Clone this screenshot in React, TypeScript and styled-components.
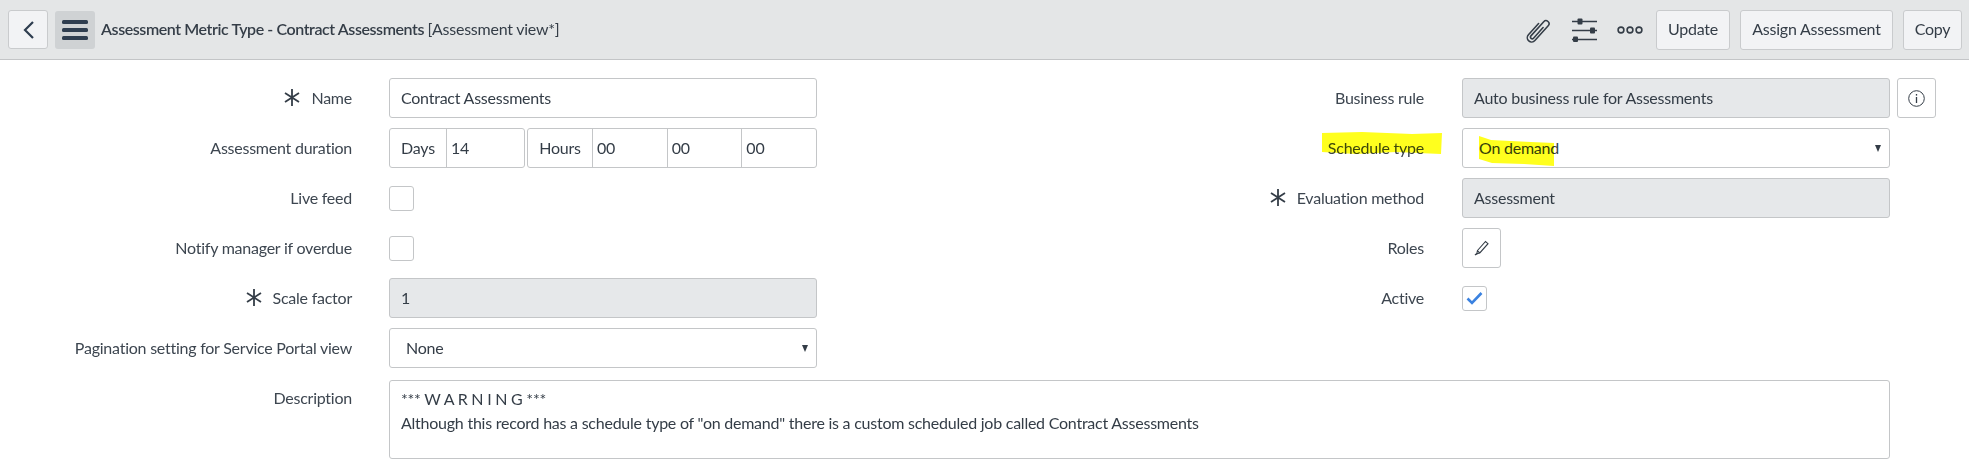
import styled, { createGlobalStyle } from "styled-components";

const GlobalStyle = createGlobalStyle`
  html, body {
    margin: 0;
    padding: 0;
    background: #ffffff;
    overflow: hidden;
  }
  body {
    font-family: "Lato", "Liberation Sans", sans-serif;
    font-size: 16px;
    letter-spacing: -0.24px;
    color: #343d47;
  }
`;

const Page = styled.div`
  width: 1969px;
  height: 466px;
`;

const Header = styled.header`
  display: flex;
  align-items: center;
  height: 59px;
  padding: 0 7px 0 8px;
  background: #e4e6e7;
  border-bottom: 1px solid #c3c5c7;
`;

const BackButton = styled.button`
  display: flex;
  align-items: center;
  justify-content: center;
  width: 40px;
  height: 39px;
  padding: 0;
  background: #f2f3f5;
  border: 1px solid #c9cbcd;
  border-radius: 3px;
`;

const MenuButton = styled.button`
  display: flex;
  align-items: center;
  justify-content: center;
  width: 40px;
  height: 38px;
  margin-left: 7px;
  padding: 0;
  background: #cfd2d4;
  border: none;
  border-radius: 3px;
`;

const Title = styled.h1`
  margin: 0 0 0 6px;
  padding-bottom: 3px;
  font-size: 16px;
  font-weight: 600;
  letter-spacing: -0.42px;
  color: #343d47;
  white-space: nowrap;
`;

const ViewName = styled.span`
  font-weight: 400;
  letter-spacing: -0.24px;
`;

const Actions = styled.div`
  display: flex;
  align-items: center;
  margin-left: auto;
`;

const IconSlot = styled.span<{ $gap: number }>`
  display: flex;
  margin-right: ${(p) => p.$gap}px;
`;

const ActionButton = styled.button<{ $width: number }>`
  box-sizing: border-box;
  width: ${(p) => p.$width}px;
  height: 40px;
  margin-left: 10px;
  padding: 0 0 2px;
  font-family: inherit;
  font-size: 16px;
  letter-spacing: inherit;
  color: #343d47;
  background: #f2f3f5;
  border: 1px solid #c9cbcd;
  border-radius: 3px;
  &:first-of-type {
    margin-left: 0;
  }
`;

const Form = styled.main`
  padding-top: 18px;
`;

const Columns = styled.div`
  display: grid;
  grid-template-columns: 985px 1fr;
`;

const Column = styled.div`
  display: flex;
  flex-direction: column;
  gap: 10px;
`;

const Row = styled.div<{ $labelWidth: number; $gap: number }>`
  display: grid;
  grid-template-columns: ${(p) => p.$labelWidth}px 1fr;
  column-gap: ${(p) => p.$gap}px;
  align-items: center;
  min-height: 40px;
`;

const DescriptionRow = styled(Row)`
  align-items: start;
  margin-top: 12px;
`;

const Label = styled.label<{ $top?: number }>`
  position: relative;
  display: flex;
  align-items: center;
  justify-content: flex-end;
  gap: 11px;
  padding-top: ${(p) => p.$top ?? 0}px;
  padding-bottom: 2px;
  color: #3d4650;
  white-space: nowrap;
`;

const Control = styled.div`
  display: flex;
  align-items: center;
  gap: 7px;
`;

const Field = styled.div<{ $readOnly?: boolean }>`
  display: flex;
  align-items: center;
  box-sizing: border-box;
  width: 428px;
  height: 40px;
  padding: 0 11px 2px;
  background: ${(p) => (p.$readOnly ? "#e6e8ea" : "#ffffff")};
  border: 1px solid #c4c6c8;
  border-radius: 3px;
  white-space: nowrap;
`;

const Select = styled(Field)`
  position: relative;
  padding-left: 16px;
`;

const Caret = styled.span`
  position: absolute;
  right: 8px;
  top: 16px;
  border-left: 3.5px solid transparent;
  border-right: 3.5px solid transparent;
  border-top: 7px solid #343d47;
`;

const Duration = styled.div`
  display: flex;
  gap: 2px;
  width: 428px;
`;

const DurationGroup = styled.div<{ $grow: number }>`
  display: flex;
  flex: ${(p) => p.$grow} 0 0;
  box-sizing: border-box;
  height: 40px;
  border: 1px solid #c4c6c8;
  border-radius: 3px;
`;

const DurationUnit = styled.div<{ $width: number }>`
  display: flex;
  align-items: center;
  justify-content: center;
  box-sizing: border-box;
  width: ${(p) => p.$width}px;
  padding-bottom: 2px;
  border-right: 1px solid #c4c6c8;
`;

const DurationValue = styled.div<{ $last?: boolean }>`
  display: flex;
  align-items: center;
  flex: 1;
  padding: 0 0 2px 4px;
  border-right: ${(p) => (p.$last ? "none" : "1px solid #c4c6c8")};
`;

const Checkbox = styled.div`
  display: flex;
  align-items: center;
  justify-content: center;
  box-sizing: border-box;
  width: 25px;
  height: 25px;
  background: #ffffff;
  border: 1px solid #c4c6c8;
  border-radius: 3px;
`;

const SquareButton = styled.button`
  display: flex;
  align-items: center;
  justify-content: center;
  width: 39px;
  height: 40px;
  padding: 0;
  background: #ffffff;
  border: 1px solid #c4c6c8;
  border-radius: 3px;
`;

const Description = styled.div`
  box-sizing: border-box;
  width: 1501px;
  height: 79px;
  padding: 6px 12px 0 11px;
  line-height: 24px;
  border: 1px solid #c4c6c8;
  border-radius: 3px;
`;

const MarkerStroke = styled.svg<{ $left: number; $top: number }>`
  position: absolute;
  left: ${(p) => p.$left}px;
  top: ${(p) => p.$top}px;
  mix-blend-mode: multiply;
  pointer-events: none;
`;

const RequiredMark = () => (
  <svg width="16" height="17" viewBox="0 0 16 17" stroke="#343d47" strokeWidth="1.8">
    <path d="M8 0v17M1 4l14 9M15 4L1 13" />
  </svg>
);

const MenuIcon = () => (
  <svg width="27" height="20" viewBox="0 0 27 20" fill="#2e3d4f">
    <rect x="0" y="0" width="26" height="4" rx="1.5" />
    <rect x="0" y="8" width="26" height="4" rx="1.5" />
    <rect x="0" y="16" width="26" height="4" rx="1.5" />
  </svg>
);

const ClipIcon = () => (
  <svg width="26" height="26" viewBox="-3 -2 30 30" fill="none" stroke="#343d47" strokeWidth="1.8" strokeLinecap="round">
    <g transform="rotate(42 12 13)">
      <path d="M14.5 7v16.5a2 2 0 0 1-4 0V1.5a3.5 3.5 0 0 1 7 0v23a5 5 0 0 1-10 0V7" />
    </g>
  </svg>
);

const SlidersIcon = () => (
  <svg width="25" height="25" viewBox="0 0 25 25" stroke="#343d47" fill="#343d47">
    <path d="M0 4.5h25M0 13.5h25M0 22.5h25" strokeWidth="1.5" />
    <rect x="5.5" y="1.5" width="5" height="6" rx="1" stroke="none" />
    <rect x="18" y="10.5" width="5" height="6" rx="1" stroke="none" />
    <rect x="1" y="19.5" width="5" height="5.5" rx="1" stroke="none" />
  </svg>
);

const DotsIcon = () => (
  <svg width="26" height="8" viewBox="0 0 26 8" fill="none" stroke="#343d47" strokeWidth="1.6">
    <circle cx="4" cy="4" r="2.9" />
    <circle cx="13" cy="4" r="2.9" />
    <circle cx="22" cy="4" r="2.9" />
  </svg>
);

const InfoIcon = () => (
  <svg width="17" height="17" viewBox="0 0 17 17" fill="none" stroke="#343d47">
    <circle cx="8.5" cy="8.5" r="7.8" strokeWidth="1" />
    <path d="M8.5 7v6" strokeWidth="1.3" />
    <path d="M8.5 4v1.6" strokeWidth="1.3" />
  </svg>
);

const PencilIcon = () => (
  <svg width="16" height="16" viewBox="0 0 16 16" fill="none" stroke="#343d47" strokeWidth="1.1">
    <path d="M3.5 10.5L11.5 1.5l2.5 2.2-8 9-3.2 1.2z" />
    <path d="M3.2 10.8l2.8 2.2" />
    <path d="M1 15l2-1.5" strokeWidth="1.4" />
  </svg>
);

const CheckIcon = () => (
  <svg width="17" height="14" viewBox="0 0 17 14" fill="none" stroke="#3b82e0" strokeWidth="2.6">
    <path d="M1.5 7.5l4.5 4.5L15.5 2" />
  </svg>
);

const App = () => {
  return (
    <Page>
      <GlobalStyle />
      <Header>
        <BackButton aria-label="Back">
          <svg width="13" height="20" viewBox="0 0 13 20" fill="none" stroke="#2e3d4f" strokeWidth="2.2">
            <path d="M11 2L3 10l8 8" />
          </svg>
        </BackButton>
        <MenuButton aria-label="Menu">
          <MenuIcon />
        </MenuButton>
        <Title>
          Assessment Metric Type - Contract Assessments <ViewName>[Assessment view*]</ViewName>
        </Title>
        <Actions>
          <IconSlot $gap={21}>
            <ClipIcon />
          </IconSlot>
          <IconSlot $gap={20}>
            <SlidersIcon />
          </IconSlot>
          <IconSlot $gap={13}>
            <DotsIcon />
          </IconSlot>
          <ActionButton $width={74}>Update</ActionButton>
          <ActionButton $width={153}>Assign Assessment</ActionButton>
          <ActionButton $width={59}>Copy</ActionButton>
        </Actions>
      </Header>

      <Form>
        <Columns>
          <Column>
            <Row $labelWidth={352} $gap={37}>
              <Label>
                <RequiredMark />
                Name
              </Label>
              <Field>Contract Assessments</Field>
            </Row>
            <Row $labelWidth={352} $gap={37}>
              <Label>Assessment duration</Label>
              <Duration>
                <DurationGroup $grow={135}>
                  <DurationUnit $width={57}>Days</DurationUnit>
                  <DurationValue $last>14</DurationValue>
                </DurationGroup>
                <DurationGroup $grow={290}>
                  <DurationUnit $width={65}>Hours</DurationUnit>
                  <DurationValue>00</DurationValue>
                  <DurationValue>00</DurationValue>
                  <DurationValue $last>00</DurationValue>
                </DurationGroup>
              </Duration>
            </Row>
            <Row $labelWidth={352} $gap={37}>
              <Label>Live feed</Label>
              <Checkbox />
            </Row>
            <Row $labelWidth={352} $gap={37}>
              <Label>Notify manager if overdue</Label>
              <Checkbox />
            </Row>
            <Row $labelWidth={352} $gap={37}>
              <Label>
                <RequiredMark />
                Scale factor
              </Label>
              <Field $readOnly>1</Field>
            </Row>
            <Row $labelWidth={352} $gap={37}>
              <Label>Pagination setting for Service Portal view</Label>
              <Select>
                None
                <Caret />
              </Select>
            </Row>
          </Column>

          <Column>
            <Row $labelWidth={439} $gap={38}>
              <Label>Business rule</Label>
              <Control>
                <Field $readOnly>Auto business rule for Assessments</Field>
                <SquareButton aria-label="Info">
                  <InfoIcon />
                </SquareButton>
              </Control>
            </Row>
            <Row $labelWidth={439} $gap={38}>
              <Label>
                Schedule type
                <MarkerStroke $left={336} $top={-7} width="122" height="24" viewBox="0 0 122 24">
                  <path d="M1 2l40-1 50 2 30-1-1 21-45-2-40 2-34-2z" fill="#ffff1e" />
                </MarkerStroke>
              </Label>
              <Select>
                On demand
                <Caret />
                <MarkerStroke $left={15} $top={7} width="77" height="31" viewBox="0 0 77 31">
                  <path d="M1 0l12 4 40 2 23 1 0 23-30-2-32-1-13-4z" fill="#ffff1e" />
                </MarkerStroke>
              </Select>
            </Row>
            <Row $labelWidth={439} $gap={38}>
              <Label>
                <RequiredMark />
                Evaluation method
              </Label>
              <Field $readOnly>Assessment</Field>
            </Row>
            <Row $labelWidth={439} $gap={38}>
              <Label>Roles</Label>
              <SquareButton aria-label="Edit roles">
                <PencilIcon />
              </SquareButton>
            </Row>
            <Row $labelWidth={439} $gap={38}>
              <Label>Active</Label>
              <Checkbox>
                <CheckIcon />
              </Checkbox>
            </Row>
          </Column>
        </Columns>

        <DescriptionRow $labelWidth={352} $gap={37}>
          <Label $top={8}>Description</Label>
          <Description>
            *** W A R N I N G ***
            <br />
            Although this record has a schedule type of "on demand" there is a custom scheduled job called Contract Assessments
          </Description>
        </DescriptionRow>
      </Form>
    </Page>
  );
};

export default App;
